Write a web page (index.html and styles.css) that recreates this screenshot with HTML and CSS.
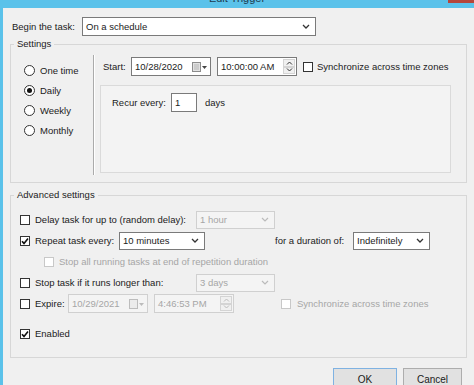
FILE: index.html
```html
<!DOCTYPE html>
<html lang="en">
<head>
  <meta charset="UTF-8" />
  <title>Edit Trigger</title>
  <link rel="stylesheet" href="styles.css">
</head>
<body>
  <div class="window">
    <div class="titlebar">
      <span class="title">Edit Trigger</span>
      <span class="close"></span>
    </div>

    <div class="body">
      <div class="begin-row">
        <span class="begin-label">Begin the task:</span>
        <div class="combo begin-combo">
          <span>On a schedule</span>
          <svg class="chev" width="8" height="5" viewBox="0 0 8 5"><path d="M1 1l3 3 3-3" fill="none" stroke="#333" stroke-width="1.3"/></svg>
        </div>
      </div>

      <fieldset class="group settings">
        <legend>Settings</legend>
        <div class="settings-inner">
          <div class="radios">
            <div class="radio-row"><span class="radio"></span>One time</div>
            <div class="radio-row"><span class="radio checked"></span>Daily</div>
            <div class="radio-row"><span class="radio"></span>Weekly</div>
            <div class="radio-row"><span class="radio"></span>Monthly</div>
          </div>
          <div class="sep"></div>
          <div class="schedule">
            <div class="start-row">
              <span class="start-label">Start:</span>
              <div class="datebox">
                <span>10/28/2020</span>
                <svg class="cal" width="15" height="10" viewBox="0 0 15 10"><rect x="0.5" y="0.5" width="8" height="9" fill="#e2e2e2" stroke="#8c8c8c"/><path d="M2 3h5M2 5h5M2 7h5" stroke="#b5b5b5"/><path d="M10 4h5l-2.5 3z" fill="#444"/></svg>
              </div>
              <div class="timebox">
                <span>10:00:00 AM</span>
                <div class="spin">
                  <span class="spin-btn"><svg width="7" height="4" viewBox="0 0 7 4"><path d="M1 3.5l2.5-2.5 2.5 2.5" fill="none" stroke="#333"/></svg></span>
                  <span class="spin-btn"><svg width="7" height="4" viewBox="0 0 7 4"><path d="M1 .5l2.5 2.5 2.5-2.5" fill="none" stroke="#333"/></svg></span>
                </div>
              </div>
              <span class="check"></span>
              <span class="check-text">Synchronize across time zones</span>
            </div>
            <div class="recur-panel">
              <div class="recur-row">
                <span class="recur-label">Recur every:</span>
                <span class="recur-input">1</span>
                <span class="recur-unit">days</span>
              </div>
            </div>
          </div>
        </div>
      </fieldset>

      <fieldset class="group advanced">
        <legend>Advanced settings</legend>
        <div class="advanced-inner">
          <div class="row">
            <span class="check"></span>
            <span class="lbl-wide">Delay task for up to (random delay):</span>
            <div class="combo combo-short disabled">
              <span>1 hour</span>
              <svg class="chev" width="8" height="5" viewBox="0 0 8 5"><path d="M1 1l3 3 3-3" fill="none" stroke="#bbb" stroke-width="1.2"/></svg>
            </div>
          </div>
          <div class="row">
            <span class="check checked"><svg width="8" height="8" viewBox="0 0 8 8"><path d="M1 4.2l2 2.2 4-5" fill="none" stroke="#111" stroke-width="1.6"/></svg></span>
            <span class="lbl-repeat">Repeat task every:</span>
            <div class="combo combo-repeat">
              <span>10 minutes</span>
              <svg class="chev" width="8" height="5" viewBox="0 0 8 5"><path d="M1 1l3 3 3-3" fill="none" stroke="#333" stroke-width="1.3"/></svg>
            </div>
            <span class="lbl-duration">for a duration of:</span>
            <div class="combo combo-duration">
              <span>Indefinitely</span>
              <svg class="chev" width="8" height="5" viewBox="0 0 8 5"><path d="M1 1l3 3 3-3" fill="none" stroke="#333" stroke-width="1.3"/></svg>
            </div>
          </div>
          <div class="row sub-row">
            <span class="check disabled"></span>
            <span class="muted">Stop all running tasks at end of repetition duration</span>
          </div>
          <div class="row">
            <span class="check"></span>
            <span class="lbl-wide">Stop task if it runs longer than:</span>
            <div class="combo combo-short disabled">
              <span>3 days</span>
              <svg class="chev" width="8" height="5" viewBox="0 0 8 5"><path d="M1 1l3 3 3-3" fill="none" stroke="#bbb" stroke-width="1.2"/></svg>
            </div>
          </div>
          <div class="row">
            <span class="check"></span>
            <span class="lbl-expire">Expire:</span>
            <div class="datebox disabled">
              <span>10/29/2021</span>
              <svg class="cal" width="15" height="10" viewBox="0 0 15 10"><rect x="0.5" y="0.5" width="8" height="9" fill="#ececec" stroke="#bdbdbd"/><path d="M10 4h5l-2.5 3z" fill="#bbb"/></svg>
            </div>
            <div class="timebox disabled">
              <span>4:46:53 PM</span>
              <div class="spin">
                <span class="spin-btn"><svg width="7" height="4" viewBox="0 0 7 4"><path d="M1 3.5l2.5-2.5 2.5 2.5" fill="none" stroke="#bbb"/></svg></span>
                <span class="spin-btn"><svg width="7" height="4" viewBox="0 0 7 4"><path d="M1 .5l2.5 2.5 2.5-2.5" fill="none" stroke="#bbb"/></svg></span>
              </div>
            </div>
            <span class="check disabled sync-check"></span>
            <span class="muted sync-text">Synchronize across time zones</span>
          </div>
          <div class="row enabled-row">
            <span class="check checked"><svg width="8" height="8" viewBox="0 0 8 8"><path d="M1 4.2l2 2.2 4-5" fill="none" stroke="#111" stroke-width="1.6"/></svg></span>
            <span>Enabled</span>
          </div>
        </div>
      </fieldset>

      <div class="buttons">
        <button class="btn btn-default">OK</button>
        <button class="btn">Cancel</button>
      </div>
    </div>
  </div>
</body>
</html>
```

FILE: styles.css
```css
* {
  box-sizing: border-box;
}
body {
  margin: 0;
  background-color: #f0f0f0;
  font-family: "Liberation Sans", Arial, sans-serif;
  font-size: 9.5px;
  color: #1b1b1b;
  white-space: nowrap;
}
.window {
  width: 474px;
  height: 385px;
  overflow: hidden;
  background-color: #f0f0f0;
}
.titlebar {
  height: 8px;
  overflow: hidden;
  background-color: #5bc2ea;
  display: grid;
  grid-template-columns: 26px 1fr 26px;
}
.title {
  grid-column: 2;
  text-align: center;
  font-size: 11px;
  line-height: 14px;
  margin-top: -9px;
  color: #1d3b4f;
}
.close {
  grid-column: 3;
  height: 3px;
  background-color: #b5463b;
}
.body {
  height: 377px;
  border-left: 3px solid #5bc2ea;
  padding: 9px 8px 0 7px;
}
.begin-row {
  display: flex;
  align-items: center;
  height: 19px;
  padding-left: 2px;
}
.begin-label {
  width: 70px;
}
.combo {
  display: flex;
  align-items: center;
  justify-content: space-between;
  height: 19px;
  padding: 0 5px 0 3px;
  background-color: #fff;
  border: 1px solid #7a7a7a;
}
.combo.disabled {
  border-color: #d0d0d0;
  background-color: #f4f4f4;
  color: #a6a6a6;
}
.begin-combo {
  width: 234px;
}
.group {
  width: 457px;
  min-width: 0;
  margin: 1px 0 0;
  padding: 0;
  border: 1px solid #d7d7d7;
}
.group legend {
  margin-left: 3px;
  padding: 0 3px;
  line-height: 14px;
}
.advanced {
  margin-top: 5px;
}

/* settings */
.settings-inner {
  display: flex;
  padding: 4px 0 7px;
}
.radios {
  width: 82px;
  padding: 5px 0 0 13px;
}
.radio-row {
  display: flex;
  align-items: center;
  gap: 5px;
  height: 20px;
}
.radio {
  width: 11px;
  height: 11px;
  border: 1px solid #333;
  border-radius: 50%;
  background-color: #fff;
  display: flex;
  align-items: center;
  justify-content: center;
}
.radio.checked::after {
  content: "";
  width: 5px;
  height: 5px;
  border-radius: 50%;
  background-color: #111;
}
.sep {
  width: 2px;
  height: 120px;
  border-left: 1px solid #ababab;
  border-right: 1px solid #fff;
}
.schedule {
  padding: 2px 0 0 8px;
}
.start-row {
  display: flex;
  align-items: center;
  height: 19px;
}
.start-label {
  width: 28px;
}
.datebox,
.timebox {
  display: flex;
  align-items: center;
  justify-content: space-between;
  width: 80px;
  height: 19px;
  padding-left: 3px;
  background-color: #fff;
  border: 1px solid #7a7a7a;
}
.datebox {
  padding-right: 3px;
}
.timebox {
  margin-left: 6px;
  padding-right: 1px;
}
.datebox.disabled,
.timebox.disabled {
  border-color: #d0d0d0;
  background-color: #f4f4f4;
  color: #a6a6a6;
}
.spin {
  display: flex;
  flex-direction: column;
  width: 12px;
  height: 15px;
}
.spin-btn {
  flex: 1;
  display: flex;
  align-items: center;
  justify-content: center;
  border: 1px solid #d4d4d4;
  background-color: #f0f0f0;
}
.check {
  width: 10px;
  height: 10px;
  flex-shrink: 0;
  border: 1px solid #333;
  background-color: #fff;
  display: flex;
  align-items: center;
  justify-content: center;
  margin-right: 5px;
}
.check.disabled {
  border-color: #c8c8c8;
}
.start-row .check {
  margin-left: 6px;
  margin-right: 4px;
}
.recur-panel {
  width: 351px;
  height: 88px;
  margin: 9px 0 0 -3px;
  padding: 7px 0 0 11px;
  border: 1px solid #dadada;
  background-color: #f3f3f3;
}
.recur-row {
  display: flex;
  align-items: center;
  height: 19px;
}
.recur-label {
  width: 59px;
}
.recur-input {
  width: 26px;
  height: 19px;
  line-height: 17px;
  padding-left: 3px;
  background-color: #fff;
  border: 1px solid #7a7a7a;
}
.recur-unit {
  margin-left: 8px;
}

/* advanced */
.advanced-inner {
  padding: 7px 0 13px 9px;
}
.row {
  display: flex;
  align-items: center;
  height: 21px;
}
.lbl-wide {
  width: 161px;
}
.lbl-repeat {
  width: 84px;
}
.lbl-duration {
  width: 78px;
  margin-left: 70px;
}
.lbl-expire {
  width: 33px;
}
.combo-short {
  width: 79px;
  height: 18px;
}
.combo-repeat {
  width: 86px;
  height: 18px;
}
.combo-duration {
  width: 77px;
  height: 18px;
}
.sub-row {
  padding-left: 24px;
}
.muted {
  color: #a6a6a6;
}
.sync-check {
  margin-left: 47px;
  margin-right: 6px;
}
.enabled-row {
  margin-top: 9px;
}

/* buttons */
.buttons {
  display: flex;
  justify-content: flex-end;
  gap: 6px;
  margin-top: 10px;
  padding-right: 4px;
}
.btn {
  height: 23px;
  width: 59px;
  padding: 0;
  font-family: inherit;
  font-size: 10px;
  color: #1b1b1b;
  background-color: #e1e1e1;
  border: 1px solid #adadad;
}
.btn-default {
  width: 64px;
  border-color: #7fb2e2;
}
```
